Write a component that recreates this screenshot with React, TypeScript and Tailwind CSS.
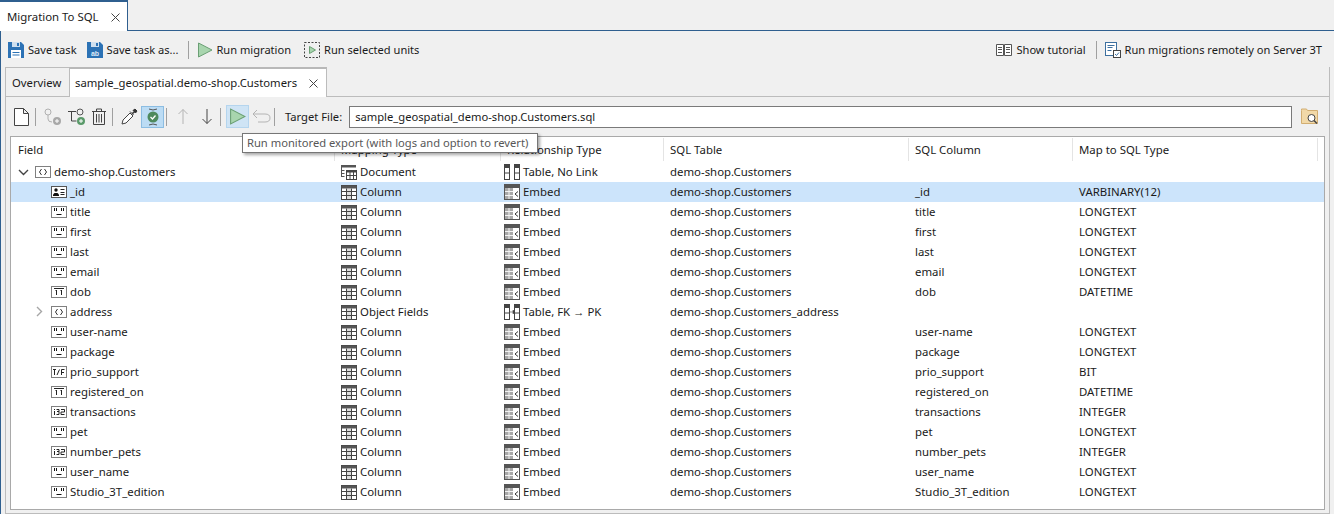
import React from "react";

const rows = [
  { field: "_id", icon: "id", map: "Column", rel: "Embed", table: "demo-shop.Customers", col: "_id", type: "VARBINARY(12)", selected: true },
  { field: "title", icon: "str", map: "Column", rel: "Embed", table: "demo-shop.Customers", col: "title", type: "LONGTEXT" },
  { field: "first", icon: "str", map: "Column", rel: "Embed", table: "demo-shop.Customers", col: "first", type: "LONGTEXT" },
  { field: "last", icon: "str", map: "Column", rel: "Embed", table: "demo-shop.Customers", col: "last", type: "LONGTEXT" },
  { field: "email", icon: "str", map: "Column", rel: "Embed", table: "demo-shop.Customers", col: "email", type: "LONGTEXT" },
  { field: "dob", icon: "date", map: "Column", rel: "Embed", table: "demo-shop.Customers", col: "dob", type: "DATETIME" },
  { field: "address", icon: "obj", map: "Object Fields", rel: "Table, FK → PK", table: "demo-shop.Customers_address", col: "", type: "", caret: true },
  { field: "user-name", icon: "str", map: "Column", rel: "Embed", table: "demo-shop.Customers", col: "user-name", type: "LONGTEXT" },
  { field: "package", icon: "str", map: "Column", rel: "Embed", table: "demo-shop.Customers", col: "package", type: "LONGTEXT" },
  { field: "prio_support", icon: "bool", map: "Column", rel: "Embed", table: "demo-shop.Customers", col: "prio_support", type: "BIT" },
  { field: "registered_on", icon: "date", map: "Column", rel: "Embed", table: "demo-shop.Customers", col: "registered_on", type: "DATETIME" },
  { field: "transactions", icon: "int", map: "Column", rel: "Embed", table: "demo-shop.Customers", col: "transactions", type: "INTEGER" },
  { field: "pet", icon: "str", map: "Column", rel: "Embed", table: "demo-shop.Customers", col: "pet", type: "LONGTEXT" },
  { field: "number_pets", icon: "int", map: "Column", rel: "Embed", table: "demo-shop.Customers", col: "number_pets", type: "INTEGER" },
  { field: "user_name", icon: "str", map: "Column", rel: "Embed", table: "demo-shop.Customers", col: "user_name", type: "LONGTEXT" },
  { field: "Studio_3T_edition", icon: "str", map: "Column", rel: "Embed", table: "demo-shop.Customers", col: "Studio_3T_edition", type: "LONGTEXT" },
];

const gridCols = "grid grid-cols-[324px_166px_163px_245px_164px_245px_1fr]";

// small boxed type badge in the Field column
function TypeIcon({ kind }: { kind: string }) {
  return (
    <svg width="16" height="12" viewBox="0 0 16 12" className="shrink-0">
      <rect x="0.5" y="0.5" width="15" height="11" fill="#fff" stroke="#808080" />
      {kind === "str" && <path d="M3.500 2v3M5.500 2v3M10.500 2v3M12.500 2v3M5.500 8.500h5" stroke="#111" fill="none" />}
      {kind === "date" && <path d="M3 2.500h10M5.500 4v5M4.500 4.500h1M10.500 4v5M9.500 4.500h1" stroke="#222" fill="none" />}
      {kind === "obj" && <path d="M6.500 3 4.500 6l2 3M9.500 3l2 3-2 3" stroke="#333" fill="none" />}
      {kind === "id" && (
        <>
          <rect x="0.500" y="0.500" width="15" height="11" fill="#fff" stroke="#555" />
          <circle cx="5" cy="4" r="1.700" fill="#111" />
          <path d="M2 10V8.500L3.500 7h3L8 8.500V10z" fill="#111" />
          <path d="M9.500 3.500h4M9.500 6.500h4M9.500 8.500h4" stroke="#222" />
        </>
      )}
      {kind === "bool" && <path d="M2 3.500h3M3.500 3.500V9M6 9l2.500-5.500M10.500 9V3.500h3M10.500 6.500h2.500" stroke="#222" fill="none" />}
      {kind === "int" && <path d="M3.500 3v1M3.500 5v4M5.500 3.500h2.500v2h-2M8 5.500v3h-2.500M10 3.500h3.500v2.500H10v2.500h3.500" stroke="#222" fill="none" />}
    </svg>
  );
}

function MapIcon({ kind }: { kind: string }) {
  if (kind === "Document") {
    return (
      <svg width="16" height="15" viewBox="0 0 16 15" className="shrink-0">
        <path d="M0 0h15v2.500H0z" fill="#555" />
        <path d="M0.500 2v10M0.500 5.500h3M0.500 8.500h3M0.500 11.500h3" stroke="#555" fill="none" />
        <rect x="5.500" y="5.500" width="10" height="9" fill="#fff" stroke="#444" />
        <rect x="5.500" y="5.500" width="10" height="2" fill="#444" />
        <path d="M5.500 10.500h10M9 5.500v9M12.500 5.500v9" stroke="#444" fill="none" />
      </svg>
    );
  }
  return (
    <svg width="16" height="15" viewBox="0 0 16 15" className="shrink-0">
      <rect x="0.500" y="0.500" width="15" height="14" fill="#fff" stroke="#444" />
      <rect x="0.500" y="0.500" width="15" height="3" fill="#555" />
      <rect x="5.500" y="4" width="5" height="10" fill="#ddd" />
      <path d="M0.500 6.500h15M0.500 10.500h15M5.500 3.500v11M10.500 3.500v11" stroke="#444" fill="none" />
    </svg>
  );
}

function RelIcon({ kind }: { kind: string }) {
  if (kind === "Embed") {
    return (
      <svg width="16" height="16" viewBox="0 0 16 16" className="shrink-0">
        <rect x="0.500" y="0.500" width="15" height="15" fill="#fff" stroke="#555" />
        <rect x="0" y="0" width="16" height="4" fill="#555" />
        <rect x="1" y="4" width="8" height="11" fill="#a8a8a8" />
        <path d="M1 7.500h8M1 11.500h8M5 4v11" stroke="#f4f4f4" fill="none" />
        <path d="M14 7.500 11 10l3 2.500" stroke="#333" fill="none" />
      </svg>
    );
  }
  return (
    <svg width="16" height="16" viewBox="0 0 16 16" className="shrink-0">
      <rect x="0.500" y="0.500" width="5" height="15" fill="#fff" stroke="#444" />
      <rect x="10.500" y="0.500" width="5" height="15" fill="#fff" stroke="#444" />
      <path d="M0.500 2.500h5M10.500 2.500h5" stroke="#444" strokeWidth="3" />
      <path d="M0.500 9h5M10.500 9h5" stroke="#444" fill="none" />
      {kind !== "Table, No Link" && <path d="M6 8h3M9 6v4l2-2z" stroke="#444" fill="#444" strokeWidth="0.600" />}
    </svg>
  );
}

function SaveIcon({ ab }: { ab?: boolean }) {
  return (
    <svg width="16" height="16" viewBox="0 0 16 16" className="shrink-0">
      <path d="M0 0h13l3 3v13H0z" fill="#2c72b5" />
      <rect x="4" y="0" width="8" height="5" fill="#cfe0f0" />
      <rect x="9" y="1" width="2" height="3" fill="#2c72b5" />
      {ab ? (
        <text x="8" y="13.500" textAnchor="middle" fontSize="7" fontWeight="700" fill="#dce9f5" fontFamily="Liberation Sans, sans-serif">ab</text>
      ) : (
        <>
          <rect x="3" y="8" width="10" height="8" fill="#fff" />
          <path d="M4.500 10.500h7M4.500 13h7" stroke="#2c72b5" />
        </>
      )}
    </svg>
  );
}

function RunIcon({ size = 16 }: { size?: number }) {
  return (
    <svg width={size} height={size} viewBox="0 0 16 16" className="shrink-0">
      <path d="M1.500 1v14L15 8z" fill="#a8d5ae" stroke="#6a9f74" />
    </svg>
  );
}

function Sep({ h = "h-[18px]" }: { h?: string }) {
  return <div className={`w-px ${h} bg-[#a0a0a0] shrink-0`} />;
}

export default function App() {
  return (
    <div className="w-[1334px] h-[514px] overflow-hidden relative bg-[#f0f0f0] text-[11.4px] leading-[16px] text-[#1a1a1a] font-['Noto_Sans','Open_Sans',sans-serif] flex flex-col">
      {/* outer tab strip */}
      <div className="h-[31px] flex shrink-0 border-b border-[#2f5f8f]">
        <div className="w-[128px] h-[31px] bg-white border-t-2 border-r border-[#2f5f8f] flex items-center pl-[7px] gap-[12px] pt-px">
          <span className="whitespace-nowrap">Migration To SQL</span>
          <svg width="9" height="9" viewBox="0 0 9 9">
            <path d="M0.500 0.500l8 8M8.500 0.500l-8 8" stroke="#444" />
          </svg>
        </div>
      </div>

      <div className="flex-1 border-l border-[#2f5f8f] pl-[4px] pr-[4px] flex flex-col min-h-0">
        {/* main toolbar */}
        <div className="h-[36px] shrink-0 flex items-center justify-between pl-[3px] pr-[8px] pt-[2px] text-[11.1px]">
          <div className="flex items-center">
            <SaveIcon />
            <span className="ml-[4px]">Save task</span>
            <span className="ml-[10px]"><SaveIcon ab /></span>
            <span className="ml-[4px]">Save task as...</span>
            <span className="ml-[10px]"><Sep /></span>
            <span className="ml-[8px]"><RunIcon /></span>
            <span className="ml-[3px]">Run migration</span>
            <span className="ml-[13px]">
              <svg width="16" height="16" viewBox="0 0 16 16">
                <rect x="0.500" y="0.500" width="15" height="15" fill="none" stroke="#444" strokeDasharray="2 1.500" />
                <path d="M5.500 4.500v7l6-3.500z" fill="#a8d5ae" stroke="#6a9f74" />
              </svg>
            </span>
            <span className="ml-[4px]">Run selected units</span>
          </div>
          <div className="flex items-center">
            <svg width="16" height="14" viewBox="0 0 16 14">
              <path d="M0.500 1.500h7v11h-7zM8.500 1.500h7v11h-7z" fill="#fff" stroke="#555" />
              <path d="M2 4.500h4M2 6.500h4M2 9.500h4M10 4.500h4M10 6.500h4M10 9.500h4" stroke="#555" />
            </svg>
            <span className="ml-[4px]">Show tutorial</span>
            <span className="ml-[10px]"><Sep /></span>
            <span className="ml-[8px]">
              <svg width="16" height="16" viewBox="0 0 16 16">
                <rect x="0.500" y="0.500" width="11" height="13" fill="#fff" stroke="#3c6f9f" />
                <path d="M2.500 3.500h7M2.500 5.500h5M2.500 8.500h4" stroke="#3c6f9f" />
                <rect x="8.500" y="8.500" width="7" height="7" fill="#fff" stroke="#444" />
                <path d="m10 12 1.500 1.500 2.500-3" stroke="#3c6f9f" fill="none" />
              </svg>
            </span>
            <span className="ml-[4px]">Run migrations remotely on Server 3T</span>
          </div>
        </div>

        {/* inner tabbed panel */}
        <div className="flex-1 min-h-0 flex flex-col relative">
          <div className="h-[30px] shrink-0 flex border-b border-[#bcbcbc] relative text-[11.3px]">
            <div className="absolute right-0 top-0 h-full w-px bg-[#bcbcbc]" />
            <div className="w-[64px] h-[30px] border-l border-t border-[#bcbcbc] flex items-center pl-[6px]">Overview</div>
            <div className="h-[30px] w-[258px] bg-white border-t-2 border-t-[#b8b8b8] border-x border-x-[#bcbcbc] flex items-center pl-[5px] gap-[12px]">
              <span className="whitespace-nowrap">sample_geospatial.demo-shop.Customers</span>
              <svg width="9" height="9" viewBox="0 0 9 9" className="shrink-0">
                <path d="M0.500 0.500l8 8M8.500 0.500l-8 8" stroke="#444" />
              </svg>
            </div>
          </div>

          <div className="flex-1 min-h-0 border-x border-b border-[#bcbcbc] px-[4px] pb-[3px] flex flex-col">
            {/* export toolbar */}
            <div className="h-[39px] shrink-0 flex items-center pl-[4px] pr-[7px] text-[11.2px]">
              <svg width="15" height="18" viewBox="0 0 15 18" className="shrink-0">
                <path d="M0.500 0.500h9l5 5v12h-14z M9.500 0.500v5h5" fill="#fff" stroke="#444" />
              </svg>
              <span className="ml-[6px]"><Sep /></span>
              <span className="ml-[8px]">
                <svg width="18" height="18" viewBox="0 0 18 18">
                  <circle cx="4" cy="4" r="3" fill="none" stroke="#b0b0b0" />
                  <path d="M4 7v4q0 3 4 3" fill="none" stroke="#b0b0b0" />
                  <circle cx="13" cy="13" r="4" fill="#a8a8a8" />
                  <path d="M11 13h4M13 11v4" stroke="#fff" />
                </svg>
              </span>
              <span className="ml-[6px]">
                <svg width="18" height="18" viewBox="0 0 18 18">
                  <path d="M0 3.500h8M3.500 3.500V13h5" fill="none" stroke="#444" />
                  <circle cx="12" cy="4" r="3" fill="none" stroke="#555" />
                  <circle cx="13" cy="13" r="4" fill="#5a9a6a" />
                  <path d="M11 13h4M13 11v4" stroke="#fff" />
                </svg>
              </span>
              <span className="ml-[6px]">
                <svg width="14" height="17" viewBox="0 0 14 17">
                  <path d="M0 3.500h14M4.500 3V1h5v2M1.500 4v12.500h11V4M4.500 6v8.500M7 6v8.500M9.500 6v8.500" fill="none" stroke="#444" />
                </svg>
              </span>
              <span className="ml-[6px]"><Sep /></span>
              <span className="ml-[8px]">
                <svg width="17" height="17" viewBox="0 0 17 17">
                  <path d="M1 16l1-4 7-7 3 3-7 7z" fill="#fff" stroke="#444" />
                  <path d="M9 3.500 11 5.500l2-2-1-1 2-1.500 2 2-1.500 2-1-1-2 2 1 1" fill="#333" stroke="#333" />
                </svg>
              </span>
              <span className="ml-[3px] w-[23px] h-[22px] bg-[#bcdcf4] border border-[#8cbde2] flex items-center justify-center">
                <svg width="14" height="18" viewBox="0 0 14 18">
                  <path d="M3 1q4 2 8 0M3 17q4-2 8 0" stroke="#555" fill="none" />
                  <circle cx="7" cy="9" r="5.500" fill="#4e8a5e" />
                  <path d="m4.500 9 2 2 3-3.500" stroke="#fff" fill="none" strokeWidth="1.300" />
                </svg>
              </span>
              <span className="ml-[2px]"><Sep /></span>
              <span className="ml-[10px]">
                <svg width="12" height="17" viewBox="0 0 12 17"><path d="M6 16V1.500M1.500 6 6 1.500 10.500 6" fill="none" stroke="#b4b4b4" /></svg>
              </span>
              <span className="ml-[12px]">
                <svg width="12" height="17" viewBox="0 0 12 17"><path d="M6 1v14.500M1.500 11 6 15.500 10.500 11" fill="none" stroke="#444" /></svg>
              </span>
              <span className="ml-[7px]"><Sep /></span>
              <span className="ml-[5px] w-[23px] h-[23px] bg-[#cfe4f5] border border-[#b5d5ee] flex items-center justify-center">
                <RunIcon size={17} />
              </span>
              <span className="ml-[3px]">
                <svg width="19" height="15" viewBox="0 0 19 15"><path d="M5 1 1 5l4 4M1.500 5H13q5 0 5 4t-5 4H6" fill="none" stroke="#b4b4b4" /></svg>
              </span>
              <span className="ml-[3px]"><Sep /></span>
              <span className="ml-[10px] whitespace-nowrap">Target File:</span>
              <div className="ml-[7px] flex-1 h-[22px] bg-white border border-[#7a7a7a] flex items-center pl-[5px]">sample_geospatial_demo-shop.Customers.sql</div>
              <span className="ml-[9px]">
                <svg width="17" height="17" viewBox="0 0 17 17">
                  <path d="M0.500 2.500V1h5l1 1.500h10v13H0.500z" fill="#f2d9a8" stroke="#d2ae72" />
                  <circle cx="10.500" cy="10" r="3.500" fill="#fff" stroke="#444" />
                  <path d="m13 12.500 3 3" stroke="#444" strokeWidth="1.500" />
                </svg>
              </span>
            </div>

            {/* tree table */}
            <div className="flex-1 min-h-0 bg-white border border-[#a9a9a9] overflow-hidden">
              <div className={`${gridCols} h-[25px] items-center`}>
                {["Field", "Mapping Type", "Relationship Type", "SQL Table", "SQL Column", "Map to SQL Type", ""].map((h, i) => (
                  <div key={i} className={`h-[23px] flex items-center whitespace-nowrap ${i === 0 ? "pl-[7px]" : "pl-[6px]"} ${i < 6 ? "border-r border-[#e4e4e4]" : ""}`}>
                    {h}
                  </div>
                ))}
              </div>
              <div className={`${gridCols} h-[20px] items-center`}>
                <div className="flex items-center pl-[7px]">
                  <svg width="11" height="7" viewBox="0 0 11 7" className="shrink-0"><path d="m1 1 4.500 4.500L10 1" fill="none" stroke="#444" strokeWidth="1.400" /></svg>
                  <span className="ml-[6px]"><TypeIcon kind="obj" /></span>
                  <span className="ml-[3px] whitespace-nowrap">demo-shop.Customers</span>
                </div>
                <div className="flex items-center gap-[3px] pl-[6px]"><MapIcon kind="Document" />Document</div>
                <div className="flex items-center gap-[3px] pl-[3px]"><RelIcon kind="Table, No Link" />Table, No Link</div>
                <div className="pl-[6px]">demo-shop.Customers</div>
                <div />
                <div />
                <div />
              </div>
              {rows.map((r) => (
                <div key={r.field} className={`${gridCols} h-[20px] items-center ${r.selected ? "bg-[#cce4fb]" : ""}`}>
                  <div className="flex items-center pl-[40px] relative">
                    {r.caret && (
                      <svg width="7" height="11" viewBox="0 0 7 11" className="absolute left-[25px] top-[2px]"><path d="m1 1 4.500 4.500L1 10" fill="none" stroke="#a6a6a6" strokeWidth="1.400" /></svg>
                    )}
                    <TypeIcon kind={r.icon} />
                    <span className="ml-[3px] whitespace-nowrap">{r.field}</span>
                  </div>
                  <div className="flex items-center gap-[3px] pl-[6px]"><MapIcon kind={r.map} />{r.map}</div>
                  <div className="flex items-center gap-[3px] pl-[3px]"><RelIcon kind={r.rel} />{r.rel}</div>
                  <div className="pl-[6px] whitespace-nowrap">{r.table}</div>
                  <div className="pl-[6px] whitespace-nowrap">{r.col}</div>
                  <div className="pl-[6px] whitespace-nowrap">{r.type}</div>
                  <div />
                </div>
              ))}
            </div>
          </div>
        </div>
      </div>

      {/* tooltip */}
      <div className="absolute left-[242px] top-[133px] h-[20px] w-[296px] bg-white border border-[#767676] shadow-[2px_2px_3px_rgba(0,0,0,0.35)] flex items-center pl-[4px] text-[11.2px] text-[#575757] whitespace-nowrap">
        Run monitored export (with logs and option to revert)
      </div>
    </div>
  );
}
